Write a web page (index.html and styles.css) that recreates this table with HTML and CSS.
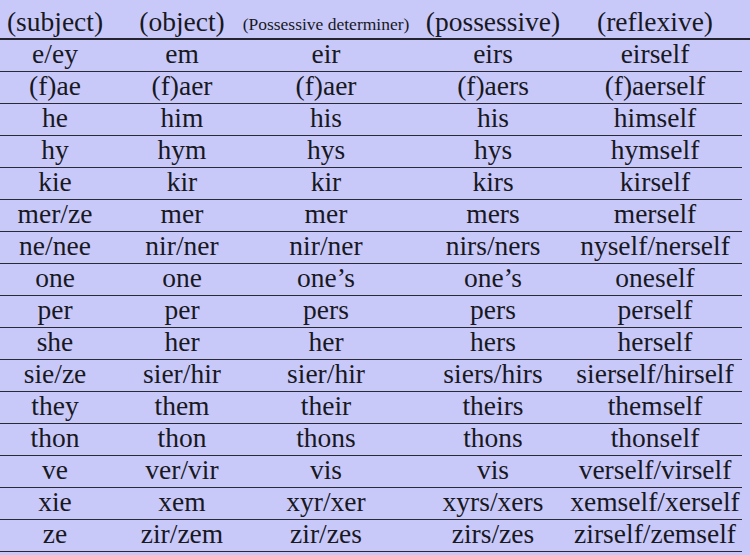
FILE: index.html
```html
<!DOCTYPE html>
<html lang="en">
<head>
<meta charset="utf-8">
<title>Pronouns</title>
<link rel="stylesheet" href="styles.css">
</head>
<body>
<div class="table">
  <div class="row head">
    <div class="cell">(subject)</div>
    <div class="cell">(object)</div>
    <div class="cell small">(Possessive determiner)</div>
    <div class="cell">(possessive)</div>
    <div class="cell last">(reflexive)</div>
  </div>
  <div class="row"><div class="cell">e/ey</div><div class="cell">em</div><div class="cell">eir</div><div class="cell">eirs</div><div class="cell last">eirself</div></div>
  <div class="row"><div class="cell">(f)ae</div><div class="cell">(f)aer</div><div class="cell">(f)aer</div><div class="cell">(f)aers</div><div class="cell last">(f)aerself</div></div>
  <div class="row"><div class="cell">he</div><div class="cell">him</div><div class="cell">his</div><div class="cell">his</div><div class="cell last">himself</div></div>
  <div class="row"><div class="cell">hy</div><div class="cell">hym</div><div class="cell">hys</div><div class="cell">hys</div><div class="cell last">hymself</div></div>
  <div class="row"><div class="cell">kie</div><div class="cell">kir</div><div class="cell">kir</div><div class="cell">kirs</div><div class="cell last">kirself</div></div>
  <div class="row"><div class="cell">mer/ze</div><div class="cell">mer</div><div class="cell">mer</div><div class="cell">mers</div><div class="cell last">merself</div></div>
  <div class="row"><div class="cell">ne/nee</div><div class="cell">nir/ner</div><div class="cell">nir/ner</div><div class="cell">nirs/ners</div><div class="cell last">nyself/nerself</div></div>
  <div class="row"><div class="cell">one</div><div class="cell">one</div><div class="cell">one’s</div><div class="cell">one’s</div><div class="cell last">oneself</div></div>
  <div class="row"><div class="cell">per</div><div class="cell">per</div><div class="cell">pers</div><div class="cell">pers</div><div class="cell last">perself</div></div>
  <div class="row"><div class="cell">she</div><div class="cell">her</div><div class="cell">her</div><div class="cell">hers</div><div class="cell last">herself</div></div>
  <div class="row"><div class="cell">sie/ze</div><div class="cell">sier/hir</div><div class="cell">sier/hir</div><div class="cell">siers/hirs</div><div class="cell last">sierself/hirself</div></div>
  <div class="row"><div class="cell">they</div><div class="cell">them</div><div class="cell">their</div><div class="cell">theirs</div><div class="cell last">themself</div></div>
  <div class="row"><div class="cell">thon</div><div class="cell">thon</div><div class="cell">thons</div><div class="cell">thons</div><div class="cell last">thonself</div></div>
  <div class="row"><div class="cell">ve</div><div class="cell">ver/vir</div><div class="cell">vis</div><div class="cell">vis</div><div class="cell last">verself/virself</div></div>
  <div class="row"><div class="cell">xie</div><div class="cell">xem</div><div class="cell">xyr/xer</div><div class="cell">xyrs/xers</div><div class="cell last">xemself/xerself</div></div>
  <div class="row"><div class="cell">ze</div><div class="cell">zir/zem</div><div class="cell">zir/zes</div><div class="cell">zirs/zes</div><div class="cell last">zirself/zemself</div></div>
</div>
</body>
</html>
```

FILE: styles.css
```css
html, body {
  margin: 0;
  padding: 0;
  background: #c9c9f9;
}
body {
  width: 750px;
  height: 555px;
  overflow: hidden;
  font-family: "Liberation Serif", serif;
  color: #18181f;
}
.table {
  display: flex;
  flex-direction: column;
}
.row {
  display: grid;
  grid-template-columns: 110px 144px 144px 190px 154px;
  width: 742px;
  height: 32px;
  box-sizing: border-box;
  border-bottom: 1px solid #2a2a36;
  font-size: 27.5px;
  line-height: 27px;
}
.row.head {
  width: 750px;
  height: 40px;
  padding-top: 8px;
  border-bottom: 2px solid #24242e;
}
.cell {
  display: flex;
  justify-content: center;
  white-space: nowrap;
  min-width: 0;
}
.cell.last {
  padding-right: 20px;
}
.cell.small {
  font-size: 17.5px;
  padding-top: 3px;
}
```
